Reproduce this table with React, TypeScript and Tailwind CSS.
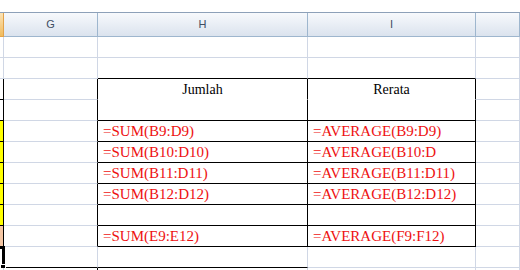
import React from 'react';

type Cell = {
  text?: string;
  kind?: 'head' | 'formula';
  bg?: string;
  right?: string;
  bottom?: string;
};

const R_GRID = 'border-r-[#d0d7e5]';
const B_GRID = 'border-b-[#d0d7e5]';
const R_BLACK = 'border-r-black';
const B_BLACK = 'border-b-black';

// column widths incl. the 1px right border: F, G, H, I, J
const widths = ['w-[4px]', 'w-[94px]', 'w-[210px]', 'w-[168px]', 'flex-1'];

function tableRow(h: Cell, i: Cell, opts: { fBg?: string; bottom?: string } = {}): Cell[] {
  const b = opts.bottom ?? B_BLACK;
  return [
    { bg: opts.fBg, right: R_BLACK, bottom: B_BLACK },
    { right: R_BLACK, bottom: B_GRID },
    { ...h, right: R_BLACK, bottom: b },
    { ...i, right: R_BLACK, bottom: b },
    {},
  ];
}

const yellow = 'bg-[#ffff00]';

const rows: Cell[][] = [
  [{}, {}, {}, {}, {}],
  [{}, {}, { bottom: B_BLACK }, { bottom: B_BLACK }, {}],
  tableRow({ text: 'Jumlah', kind: 'head' }, { text: 'Rerata', kind: 'head' }, { bottom: 'border-b-white' }),
  tableRow({}, {}),
  tableRow({ text: '=SUM(B9:D9)', kind: 'formula' }, { text: '=AVERAGE(B9:D9)', kind: 'formula' }, { fBg: yellow }),
  tableRow({ text: '=SUM(B10:D10)', kind: 'formula' }, { text: '=AVERAGE(B10:D', kind: 'formula' }, { fBg: yellow }),
  tableRow({ text: '=SUM(B11:D11)', kind: 'formula' }, { text: '=AVERAGE(B11:D11)', kind: 'formula' }, { fBg: yellow }),
  tableRow({ text: '=SUM(B12:D12)', kind: 'formula' }, { text: '=AVERAGE(B12:D12)', kind: 'formula' }, { fBg: yellow }),
  tableRow({}, {}, { fBg: yellow }),
  tableRow({ text: '=SUM(E9:E12)', kind: 'formula' }, { text: '=AVERAGE(F9:F12)', kind: 'formula' }, { fBg: 'bg-[#f5c7a4]' }),
  [{ right: R_BLACK, bottom: B_BLACK }, { bottom: B_BLACK }, { bottom: B_BLACK }, {}, {}],
  [{}, { right: R_BLACK }, {}, {}, {}],
];

function SheetCell({ cell, col }: { cell: Cell; col: number }) {
  const base = `${widths[col]} shrink-0 h-full border-r border-b ${cell.right ?? R_GRID} ${cell.bottom ?? B_GRID} ${cell.bg ?? 'bg-white'} overflow-hidden whitespace-nowrap flex`;
  if (cell.kind === 'head') {
    return <div className={`${base} items-center justify-center text-[14px] text-black pt-[1px]`}>{cell.text}</div>;
  }
  if (cell.kind === 'formula') {
    return <div className={`${base} items-end pl-[5px] text-[15px] leading-[19px] text-[#ee1111]`}>{cell.text}</div>;
  }
  return <div className={base} />;
}

export default function App() {
  return (
    <div className="w-[520px] h-[270px] overflow-hidden bg-white font-['Liberation_Serif',serif]">
      <div className="h-[12px] bg-white" />
      {/* column header */}
      <div className="flex h-[25px] border-t border-[#8da0b8] font-['Liberation_Sans',sans-serif] text-[11px] text-[#3f4d63]">
        <div className="w-[4px] shrink-0 h-full border-r border-b border-[#e2a24a] bg-gradient-to-b from-[#fbe3b5] to-[#f1bb5a]" />
        {['G', 'H', 'I', ''].map((c, i) => (
          <div
            key={i}
            className={`${widths[i + 1]} shrink-0 h-full border-r border-b border-[#9eb6ce] bg-gradient-to-b from-[#f7f9fc] to-[#dbe3ee] flex items-center justify-center`}
          >
            {c}
          </div>
        ))}
      </div>
      {rows.map((r, ri) => (
        <div key={ri} className="relative flex h-[21px]">
          {r.map((c, ci) => (
            <SheetCell key={ci} cell={c} col={ci} />
          ))}
          {ri === 10 && (
            <>
              {/* active cell outline and fill handle */}
              <div className="absolute left-0 top-[-1px] w-[5px] h-[3px] bg-black" />
              <div className="absolute left-[2px] top-[-1px] w-[3px] h-[22px] bg-black" />
              <div className="absolute left-0 top-[17px] w-[6px] h-[6px] bg-black border border-white" />
            </>
          )}
        </div>
      ))}
    </div>
  );
}
